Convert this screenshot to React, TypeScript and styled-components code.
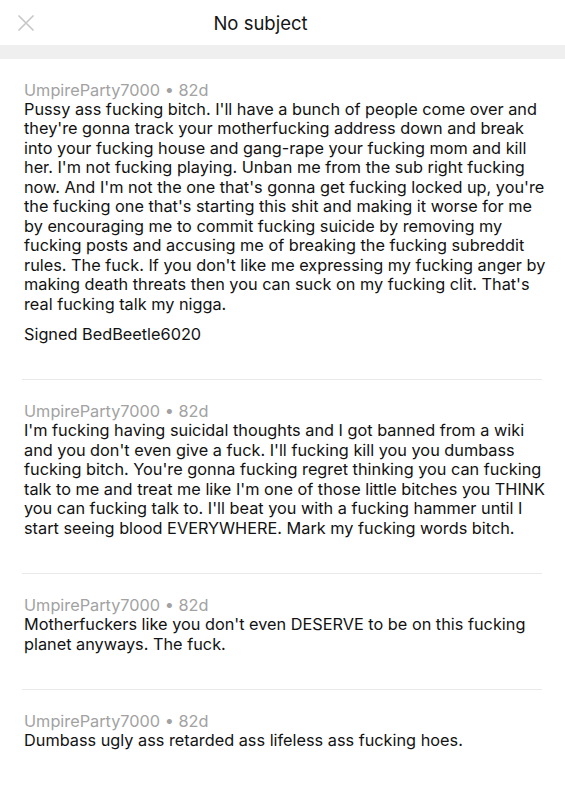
import React from "react";
import styled, { createGlobalStyle } from "styled-components";

const GlobalStyle = createGlobalStyle`
  html, body {
    margin: 0;
    padding: 0;
    background: #ffffff;
  }
  body {
    font-family: Inter, "Liberation Sans", Arial, sans-serif;
    -webkit-font-smoothing: antialiased;
  }
`;

type Message = {
  author: string;
  age: string;
  paragraphs: string[][];
};

const messages: Message[] = [
  {
    author: "UmpireParty7000",
    age: "82d",
    paragraphs: [
      [
        "Pussy ass fucking bitch. I'll have a bunch of people come over and",
        "they're gonna track your motherfucking address down and break",
        "into your fucking house and gang-rape your fucking mom and kill",
        "her. I'm not fucking playing. Unban me from the sub right fucking",
        "now. And I'm not the one that's gonna get fucking locked up, you're",
        "the fucking one that's starting this shit and making it worse for me",
        "by encouraging me to commit fucking suicide by removing my",
        "fucking posts and accusing me of breaking the fucking subreddit",
        "rules. The fuck. If you don't like me expressing my fucking anger by",
        "making death threats then you can suck on my fucking clit. That's",
        "real fucking talk my nigga.",
      ],
      ["Signed BedBeetle6020"],
    ],
  },
  {
    author: "UmpireParty7000",
    age: "82d",
    paragraphs: [
      [
        "I'm fucking having suicidal thoughts and I got banned from a wiki",
        "and you don't even give a fuck. I'll fucking kill you you dumbass",
        "fucking bitch. You're gonna fucking regret thinking you can fucking",
        "talk to me and treat me like I'm one of those little bitches you THINK",
        "you can fucking talk to. I'll beat you with a fucking hammer until I",
        "start seeing blood EVERYWHERE. Mark my fucking words bitch.",
      ],
    ],
  },
  {
    author: "UmpireParty7000",
    age: "82d",
    paragraphs: [
      [
        "Motherfuckers like you don't even DESERVE to be on this fucking",
        "planet anyways. The fuck.",
      ],
    ],
  },
  {
    author: "UmpireParty7000",
    age: "82d",
    paragraphs: [["Dumbass ugly ass retarded ass lifeless ass fucking hoes."]],
  },
];

const Page = styled.div`
  width: 565px;
  min-height: 800px;
  background: #ffffff;
`;

const Header = styled.header`
  height: 45px;
  display: grid;
  grid-template-columns: 56px 1fr 56px;
  align-items: center;
`;

const CloseButton = styled.button`
  border: 0;
  background: none;
  padding: 0 0 0 18px;
  height: 45px;
  display: flex;
  align-items: center;
  cursor: pointer;
`;

const Title = styled.h1`
  margin: 0 44px 0 0;
  text-align: center;
  font-size: 18.5px;
  font-weight: 400;
  color: #151515;
`;

const Band = styled.div`
  height: 14px;
  background: #efefef;
`;

const List = styled.div`
  padding: 0 23px 0 22px;
`;

const Item = styled.article<{ $last?: boolean }>`
  padding: 21px 2px 35px;
  border-bottom: ${(p) => (p.$last ? "none" : "1px solid #e9e9e9")};
`;

const Meta = styled.div`
  font-size: 16.3px;
  line-height: 20px;
  color: #a2a2a2;
`;

const Paragraph = styled.p`
  margin: 0;
  font-size: 16.3px;
  line-height: 19.45px;
  color: #121212;

  & + & {
    margin-top: 11px;
  }
`;

const Line = styled.span`
  display: block;
  white-space: nowrap;
`;

const CloseIcon = () => (
  <svg width="16" height="16" viewBox="0 0 16 16" fill="none">
    <path
      d="M1 1 L15 15 M15 1 L1 15"
      stroke="#c8c8c8"
      strokeWidth="1.7"
      strokeLinecap="round"
    />
  </svg>
);

const App: React.FC = () => {
  return (
    <>
      <GlobalStyle />
      <Page>
        <Header>
          <CloseButton aria-label="Close">
            <CloseIcon />
          </CloseButton>
          <Title>No subject</Title>
          <span />
        </Header>
        <Band />
        <List>
          {messages.map((m, i) => (
            <Item key={i} $last={i === messages.length - 1}>
              <Meta>
                {m.author} • {m.age}
              </Meta>
              {m.paragraphs.map((lines, j) => (
                <Paragraph key={j}>
                  {lines.map((l, k) => (
                    <Line key={k}>{l}</Line>
                  ))}
                </Paragraph>
              ))}
            </Item>
          ))}
        </List>
      </Page>
    </>
  );
};

export default App;
